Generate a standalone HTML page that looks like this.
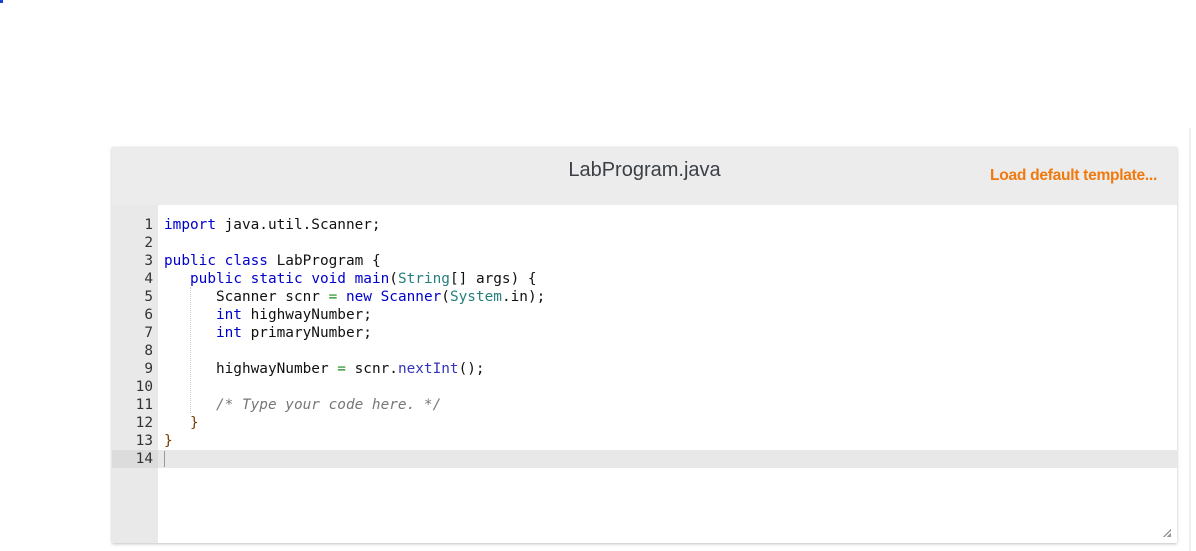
<!DOCTYPE html>
<html><head><meta charset="utf-8"><style>
body{margin:0;width:1196px;height:551px;background:#fff;position:relative;overflow:hidden;font-family:"Liberation Sans",sans-serif}
.dot{position:absolute;left:0;top:0;width:3px;height:3px;background:#1a3fd6}
.vline{position:absolute;left:1189px;top:128px;width:2px;height:423px;background:#f0f0f0}
.panel{position:absolute;left:112px;top:147px;width:1065px;height:396px;background:#fff;box-shadow:0 1px 3px rgba(0,0,0,.25)}
.hdr{position:absolute;left:0;top:0;width:1065px;height:58px;background:#ececec}
.title{position:absolute;left:0;width:1065px;top:12px;text-align:center;font-size:20px;color:#3b4046}
.load{position:absolute;right:20px;top:20px;font-size:15.6px;font-weight:bold;color:#f07a0e;letter-spacing:-0.3px}
.gut{position:absolute;left:0;top:58px;width:46px;height:338px;background:#e9e9e9}
.code{position:absolute;left:0;top:69px;width:1065px;font-family:"DejaVu Sans Mono","Liberation Mono",monospace;font-size:14.4px}
.ln{height:18px;line-height:18px;position:relative;white-space:pre;color:#111}
.ln .n{position:absolute;left:0;width:41px;text-align:right;color:#333}
.ln .c{position:absolute;left:52px}
.act{background:#e8e8e8}
.k{color:#0000cc}.t{color:#267f7f}.g{color:#1a8a1a}.m{color:#3333bb}.cm{color:#777;font-style:italic}.b{color:#7a3b00}
.guide{position:absolute;left:78px;top:140px;height:126px;border-left:1px dotted #ccc}
.cur{position:absolute;left:52px;top:1px;width:1px;height:16px;background:#999}
.rs{position:absolute;right:6px;bottom:6px;width:8px;height:8px;background:linear-gradient(135deg,transparent 50%,#999 50%,#999 60%,transparent 60%,transparent 75%,#999 75%)}
</style></head><body>
<div class="dot"></div><div class="vline"></div>
<div class="panel">
<div class="hdr"><div class="title">LabProgram.java</div><div class="load">Load default template...</div></div>
<div class="gut"></div>
<div class="code">
<div class="ln"><span class="n">1</span><span class="c"><span class="k">import</span> java.util.Scanner;</span></div>
<div class="ln"><span class="n">2</span><span class="c"></span></div>
<div class="ln"><span class="n">3</span><span class="c"><span class="k">public</span> <span class="k">class</span> LabProgram {</span></div>
<div class="ln"><span class="n">4</span><span class="c">   <span class="k">public</span> <span class="k">static</span> <span class="k">void</span> <span class="k">main</span>(<span class="t">String</span>[] args) {</span></div>
<div class="ln"><span class="n">5</span><span class="c">      Scanner scnr <span class="g">=</span> <span class="k">new</span> <span class="k">Scanner</span>(<span class="t">System</span>.in);</span></div>
<div class="ln"><span class="n">6</span><span class="c">      <span class="k">int</span> highwayNumber;</span></div>
<div class="ln"><span class="n">7</span><span class="c">      <span class="k">int</span> primaryNumber;</span></div>
<div class="ln"><span class="n">8</span><span class="c"></span></div>
<div class="ln"><span class="n">9</span><span class="c">      highwayNumber <span class="g">=</span> scnr.<span class="m">nextInt</span>();</span></div>
<div class="ln"><span class="n">10</span><span class="c"></span></div>
<div class="ln"><span class="n">11</span><span class="c">      <span class="cm">/* Type your code here. */</span></span></div>
<div class="ln"><span class="n">12</span><span class="c">   <span class="b">}</span></span></div>
<div class="ln"><span class="n">13</span><span class="c"><span class="b">}</span></span></div>
<div class="ln act"><span class="n" style="background:#dcdcdc;left:0;width:46px;padding-right:5px;box-sizing:border-box">14</span><span class="cur"></span></div>
</div>
<div class="guide"></div>
<div class="rs"></div>
</div>
</body></html>
